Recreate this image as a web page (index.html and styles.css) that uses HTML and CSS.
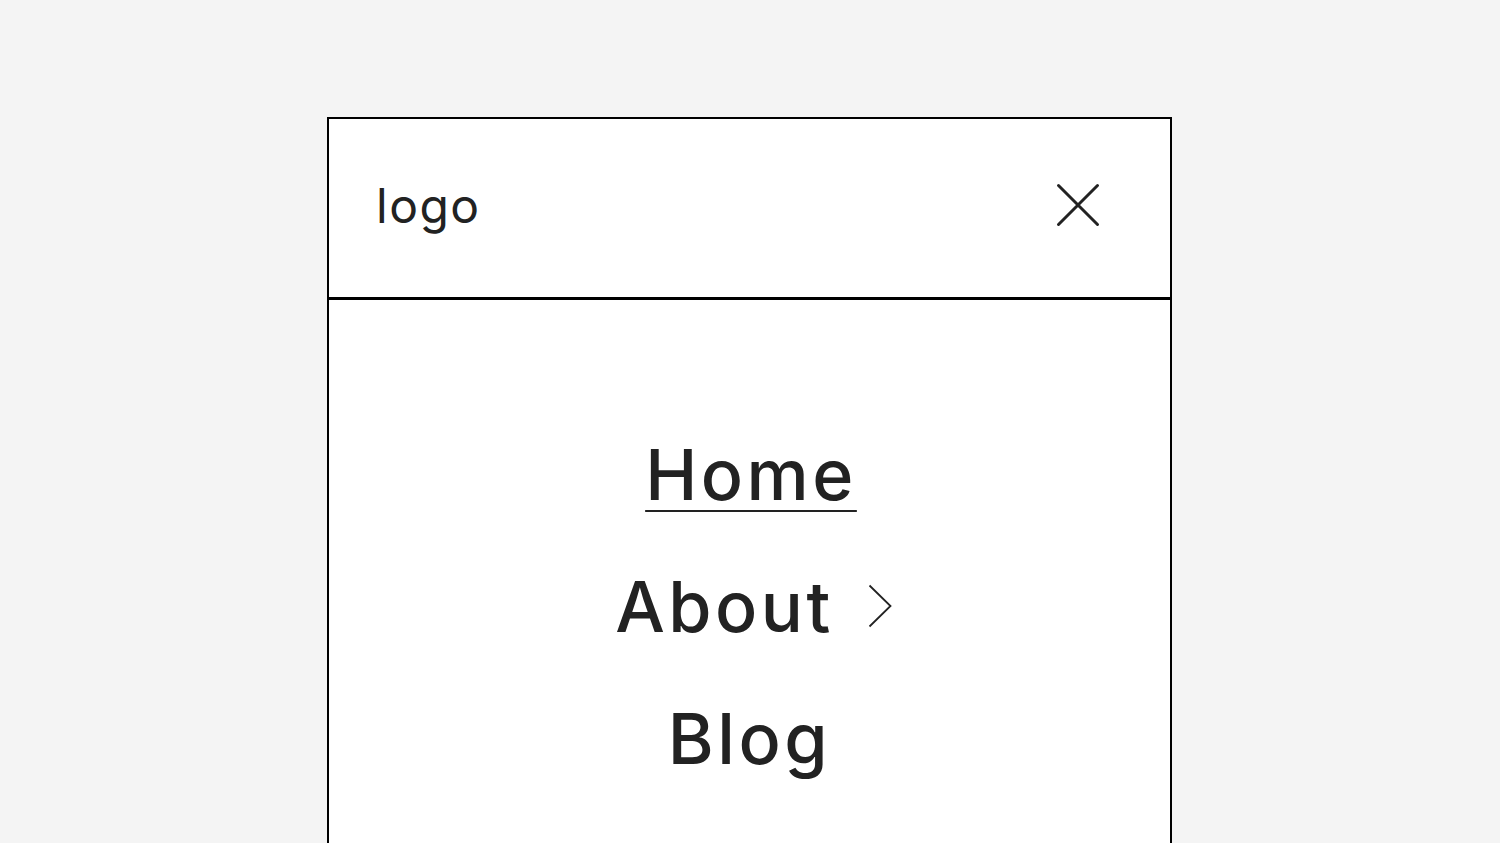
FILE: index.html
```html
<!DOCTYPE html>
<html lang="en">
<head>
    <meta charset="UTF-8">
    <title>Mobile menu</title>
    <meta name="viewport" content="width=device-width, initial-scale=1.0">
    <link rel="stylesheet" href="styles.css">
</head>
<body>
    <div class="menu-frame">
        <header class="menu-header">
            <span class="logo">logo</span>
            <button class="close-btn" type="button" aria-label="Close menu">
                <svg width="44" height="44" viewBox="0 0 44 44">
                    <path d="M2.5 2.5 L41.5 41.5 M41.5 2.5 L2.5 41.5" stroke="#222" stroke-width="3" stroke-linecap="round" fill="none"/>
                </svg>
            </button>
        </header>

        <nav class="menu-nav">
            <a href="#" class="menu-item active">Home</a>
            <a href="#" class="menu-item has-sub">About
                <svg class="chevron" width="24" height="44" viewBox="0 0 24 44">
                    <polyline points="1.5,1.5 22.5,22 1.5,42.5" stroke="#222" stroke-width="1.8" fill="none"/>
                </svg>
            </a>
            <a href="#" class="menu-item">Blog</a>
        </nav>
    </div>
</body>
</html>
```

FILE: styles.css
```css
html, body {
    margin: 0;
    height: 100%;
    overflow: hidden;
}

body {
    font-family: Inter, 'Noto Sans', sans-serif;
    background-color: #f4f4f4;
    color: #222;
}

.menu-frame {
    width: 841px;
    min-height: 760px;
    margin: 117px 0 0 327px;
    border: 2px solid #000;
    background: #fff;
}

.menu-header {
    display: flex;
    align-items: center;
    justify-content: space-between;
    height: 178px;
    padding: 0 70px 0 47px;
    border-bottom: 3px solid #000;
}

.logo {
    font-size: 48px;
    line-height: 1;
    letter-spacing: 1.5px;
    margin-top: -4px;
}

.close-btn {
    display: flex;
    padding: 0;
    border: none;
    background: none;
    cursor: pointer;
    margin-top: -6px;
}

.menu-nav {
    display: flex;
    flex-direction: column;
    align-items: center;
    padding-top: 109px;
}

.menu-item {
    display: flex;
    align-items: center;
    gap: 34px;
    color: #222;
    text-decoration: none;
    font-size: 70px;
    font-weight: 500;
    line-height: 132px;
    letter-spacing: 3.5px;
}

.menu-item.active {
    text-decoration: underline;
    text-decoration-thickness: 2px;
    text-underline-offset: 10px;
    padding-left: 3px;
}

.menu-item.has-sub {
    margin-left: 8px;
}

.chevron {
    margin-top: -2px;
}
```
